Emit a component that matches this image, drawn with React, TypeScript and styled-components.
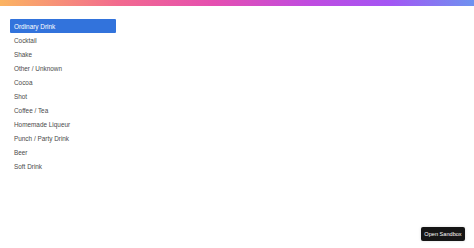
import React, { useState } from "react";
import styled, { createGlobalStyle } from "styled-components";

const Global = createGlobalStyle`
  html, body { margin: 0; padding: 0; background: #ffffff; }
  body { font-family: "Liberation Sans", Arial, Helvetica, sans-serif; }
  * { box-sizing: border-box; }
`;

const Page = styled.div`
  width: 474px;
  height: 248px;
  position: relative;
  display: flex;
  flex-direction: column;
  overflow: hidden;
`;

const TopBar = styled.div`
  height: 6px;
  flex: none;
  background: linear-gradient(
    to right,
    #fbb462 0%,
    #f26a8f 25%,
    #e54fb0 45%,
    #c04bdf 65%,
    #a455f4 82%,
    #6e92f0 100%
  );
`;

const Content = styled.div`
  padding: 13px 0 0 10px;
`;

const Menu = styled.ul`
  list-style: none;
  margin: 0;
  padding: 0;
  width: 106px;
`;

const Item = styled.li<{ $active?: boolean }>`
  height: 14.1px;
  display: flex;
  align-items: center;
  padding-left: 4px;
  font-size: 6.4px;
  color: ${(p) => (p.$active ? "#ffffff" : "#4a4a4a")};
  background: ${(p) => (p.$active ? "#3273dc" : "transparent")};
  border-radius: 1px;
  cursor: pointer;
  white-space: nowrap;
`;

const SandboxButton = styled.button`
  position: absolute;
  right: 9px;
  bottom: 7px;
  width: 44px;
  height: 14px;
  border: none;
  border-radius: 2px;
  background: #151515;
  color: #ffffff;
  font-family: "Liberation Sans", Arial, sans-serif;
  font-size: 5.6px;
  padding: 0;
  display: flex;
  align-items: center;
  justify-content: center;
  box-shadow: 0 0 3px rgba(0, 0, 0, 0.15);
`;

const categories = [
  "Ordinary Drink",
  "Cocktail",
  "Shake",
  "Other / Unknown",
  "Cocoa",
  "Shot",
  "Coffee / Tea",
  "Homemade Liqueur",
  "Punch / Party Drink",
  "Beer",
  "Soft Drink",
];

export default function App() {
  const [active, setActive] = useState(0);
  return (
    <>
      <Global />
      <Page>
        <TopBar />
        <Content>
          <Menu>
            {categories.map((c, i) => (
              <Item key={c} $active={i === active} onClick={() => setActive(i)}>
                {c}
              </Item>
            ))}
          </Menu>
        </Content>
        <SandboxButton>Open Sandbox</SandboxButton>
      </Page>
    </>
  );
}
